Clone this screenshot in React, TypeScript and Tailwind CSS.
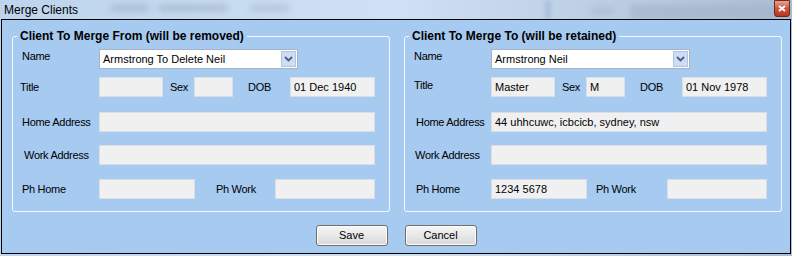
import React from "react";

const font = { fontFamily: '"Liberation Sans", Arial, sans-serif' };

type BoxProps = { value?: string; w: string };

const TextBox = ({ value = "", w }: BoxProps) => (
  <div
    className={`${w} h-[20px] shrink-0 border border-[#d8dee6] bg-[#f0f0f0] pl-[3px] text-[11px] leading-[18px] text-black`}
  >
    {value}
  </div>
);

const ComboBox = ({ value }: { value: string }) => (
  <div className="flex h-[20px] w-[199px] shrink-0 items-stretch border border-[#a4b3c6] bg-white">
    <div className="flex-1 pl-[3px] text-[11px] leading-[18px] text-black">{value}</div>
    <div className="m-[1px] flex w-[15px] items-center justify-center border border-[#b4c4e0] bg-[#cfdcf5]">
      <svg width="9" height="6" viewBox="0 0 9 6">
        <path d="M1 1 L4.5 4.5 L8 1" fill="none" stroke="#4a5d80" strokeWidth="1.8" />
      </svg>
    </div>
  </div>
);

const Label = ({ text, w, pl }: { text: string; w: string; pl: string }) => (
  <div
    className={`${w} ${pl} shrink-0 whitespace-nowrap text-[11px] leading-[12px] tracking-[-0.3px] text-black`}
  >
    {text}
  </div>
);

type Client = {
  legend: string;
  name: string;
  title?: string;
  sex?: string;
  dob: string;
  home?: string;
  phHome?: string;
  titlePl: string;
  homePl: string;
  workPl: string;
  phHomePl: string;
  phWorkPl: string;
  titleLift?: boolean;
};

const GroupBox = ({ c }: { c: Client }) => (
  <fieldset className="w-[378px] rounded-[3px] border border-[#f4f8fc] pb-[12px]">
    <legend className="ml-[4px] px-[3px] text-[12px] font-bold leading-[14px] text-black">{c.legend}</legend>
    <div className="mt-[6px] flex items-start">
      <Label text="Name" w="w-[86px]" pl="pl-[9px] pt-[1px]" />
      <ComboBox value={c.name} />
    </div>
    <div className="mt-[8px] flex items-center">
      <div className={`w-[86px] shrink-0 ${c.titleLift ? "-mt-[5px]" : ""}`}>
        <Label text="Title" w="w-[86px]" pl={c.titlePl} />
      </div>
      <TextBox w="w-[64px]" value={c.title} />
      <Label text="Sex" w="w-[31px]" pl="pl-[7px]" />
      <TextBox w="w-[39px]" value={c.sex} />
      <Label text="DOB" w="w-[57px]" pl="pl-[15px]" />
      <TextBox w="w-[85px]" value={c.dob} />
    </div>
    <div className="mt-[15px] flex items-center">
      <Label text="Home Address" w="w-[86px]" pl={c.homePl} />
      <TextBox w="w-[276px]" value={c.home} />
    </div>
    <div className="mt-[13px] flex items-center">
      <Label text="Work Address" w="w-[86px]" pl={c.workPl} />
      <TextBox w="w-[276px]" />
    </div>
    <div className="mt-[14px] flex items-center">
      <Label text="Ph Home" w="w-[86px]" pl={c.phHomePl} />
      <TextBox w="w-[96px]" value={c.phHome} />
      <Label text="Ph Work" w="w-[80px]" pl={c.phWorkPl} />
      <TextBox w="w-[100px]" />
    </div>
  </fieldset>
);

const Button = ({ label }: { label: string }) => (
  <button className="h-[21px] w-[72px] rounded-[3px] border border-[#707070] bg-gradient-to-b from-[#f6f6f6] via-[#e8e8e8] to-[#d8d8d8] text-[11px] leading-[19px] text-black shadow-[inset_0_0_0_1px_#fcfcfc]">
    {label}
  </button>
);

const from: Client = {
  legend: "Client To Merge From (will be removed)",
  name: "Armstrong To Delete Neil",
  dob: "01 Dec 1940",
  titlePl: "pl-[7px]",
  homePl: "pl-[9px]",
  workPl: "pl-[11px]",
  phHomePl: "pl-[9px]",
  phWorkPl: "pl-[21px]",
};

const to: Client = {
  legend: "Client To Merge To (will be retained)",
  name: "Armstrong Neil",
  title: "Master",
  sex: "M",
  dob: "01 Nov 1978",
  home: "44 uhhcuwc, icbcicb, sydney, nsw",
  phHome: "1234 5678",
  titlePl: "pl-[9px]",
  homePl: "pl-[11px]",
  workPl: "pl-[10px]",
  phHomePl: "pl-[11px]",
  phWorkPl: "pl-[9px]",
  titleLift: true,
};

export default function App() {
  return (
    <div
      className="relative h-[256px] w-[792px] overflow-hidden bg-gradient-to-r from-[#bdd4ec] via-[#cfe1f4] to-[#a9bdd3]"
      style={font}
    >
      {/* blurred glass behind title bar */}
      <div className="pointer-events-none absolute left-[110px] top-[4px] h-[8px] w-[40px] rounded-full bg-[#9aa8bb] opacity-50 blur-[3px]" />
      <div className="pointer-events-none absolute left-[158px] top-[4px] h-[8px] w-[70px] rounded-full bg-[#9aa8bb] opacity-50 blur-[3px]" />
      <div className="pointer-events-none absolute left-[250px] top-[4px] h-[8px] w-[40px] rounded-full bg-[#9aa8bb] opacity-40 blur-[3px]" />
      <div className="pointer-events-none absolute left-[545px] top-[0px] h-[19px] w-[6px] bg-[#9cb3cf] opacity-60 blur-[2px]" />
      <div className="pointer-events-none absolute left-[590px] top-[8px] h-[6px] w-[25px] rounded-full bg-[#9aa8bb] opacity-40 blur-[3px]" />
      <div className="pointer-events-none absolute left-[630px] top-[5px] h-[14px] w-[162px] bg-[#a3b4c8] opacity-60 blur-[2px]" />

      <div className="relative flex h-[19px] items-center justify-between pl-[4px] pr-[2px]">
        <span className="text-[12px] leading-[14px] text-black">Merge Clients</span>
        <div className="flex h-[17px] w-[16px] self-start items-center justify-center rounded-b-[3px] border border-[#6b2a22] bg-gradient-to-b from-[#e8a08c] via-[#d0553c] to-[#b8341f]">
          <svg width="8" height="7" viewBox="0 0 8 7">
            <path d="M1 1 L7 6 M7 1 L1 6" stroke="#fff" strokeWidth="1.8" />
          </svg>
        </div>
      </div>

      <div className="relative mx-[1px] flex h-[235px] flex-col border border-black bg-[#a6caf0]">
        <div className="ml-[10px] mt-[9px] flex gap-[14px]">
          <GroupBox c={from} />
          <GroupBox c={to} />
        </div>
        <div className="mt-[13px] flex justify-center gap-[17px]">
          <Button label="Save" />
          <Button label="Cancel" />
        </div>
      </div>
    </div>
  );
}
